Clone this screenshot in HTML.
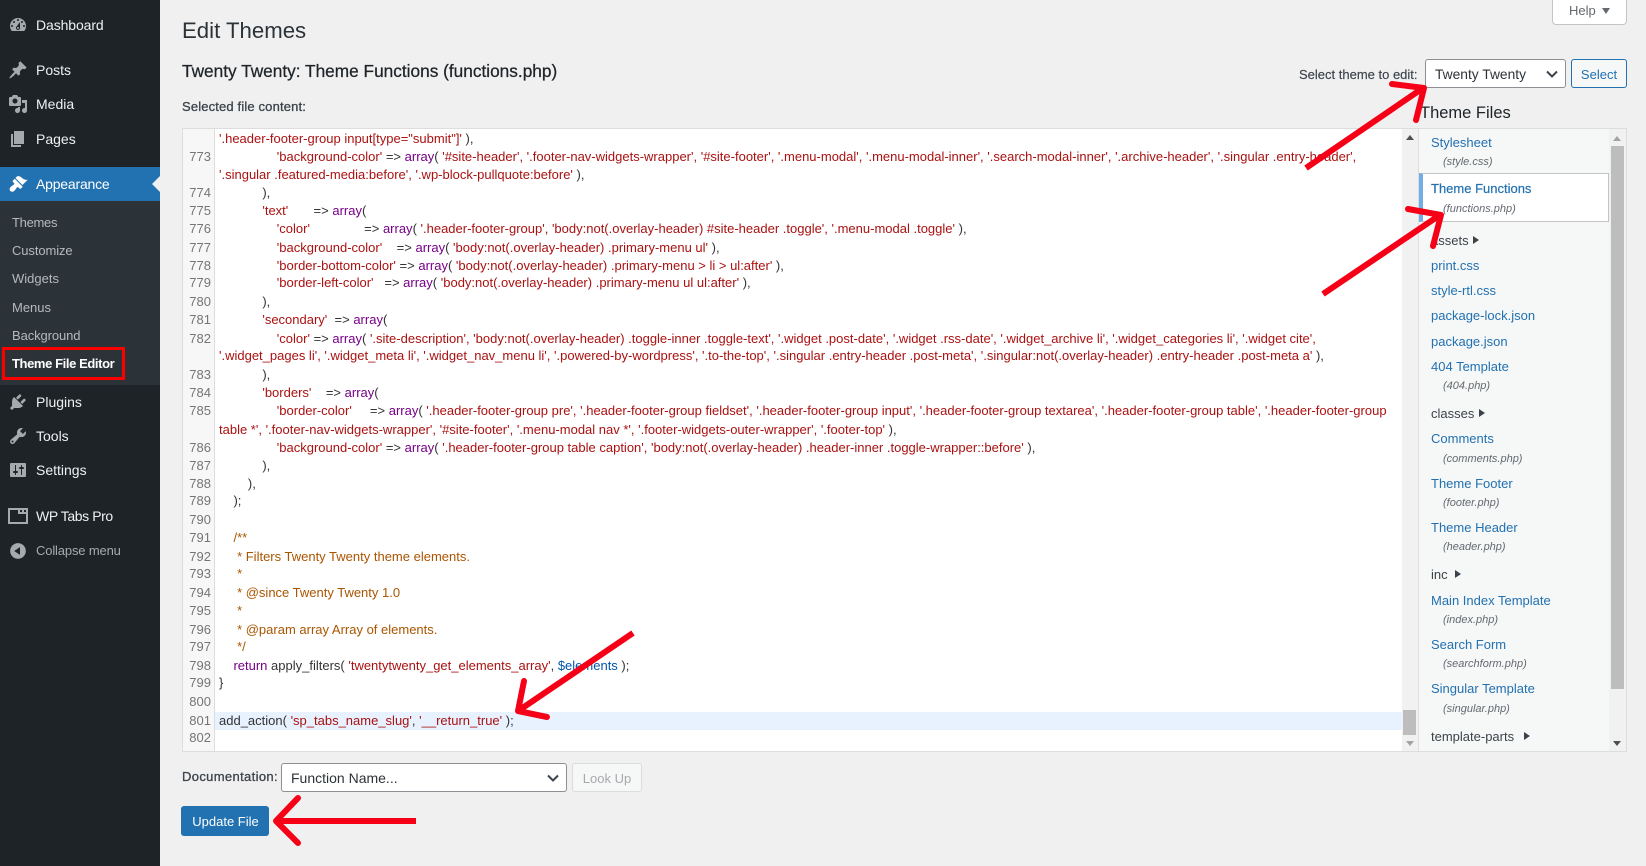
<!DOCTYPE html>
<html><head><meta charset="utf-8"><title>Edit Themes</title>
<style>
html,body{margin:0;padding:0;width:1646px;height:866px;overflow:hidden;background:#f0f0f1;font-family:"Liberation Sans",sans-serif;color:#3c434a}
div,span,svg{position:absolute}
b{font-weight:400}
#side{left:0;top:0;width:160px;height:866px;background:#1d2327}
.m{left:36px;font-size:14px;line-height:20px;color:#f0f0f1;white-space:nowrap}
.s{left:12px;font-size:13px;line-height:18px;color:#b4b9be;white-space:nowrap}
.ic{left:0;top:0}
#ed{left:182px;top:128px;width:1236px;height:624px;background:#fff;border:1px solid #ddd;box-sizing:border-box}
#gut{left:182px;top:128px;width:33px;height:624px;background:#f7f7f7;border:1px solid #ddd;box-sizing:border-box}
.r{left:183px;height:18px;font-size:13px;line-height:18px;color:#333;white-space:pre;tab-size:4}
.r i{position:absolute;left:0;width:28px;text-align:right;color:#757575;font-style:normal}
.r code{position:absolute;left:36px;font:inherit;white-space:pre;tab-size:4}
.st{color:#a11}.k{color:#708}.c{color:#a50}.v{color:#05a}
#fl{left:1418px;top:128px;width:209px;height:624px;background:#f6f7f7;border:1px solid #ddd;box-sizing:border-box}
.f{left:1431px;font-size:13px;line-height:18px;color:#2271b1;white-space:nowrap}
.n{left:1443px;font-size:11px;line-height:16px;font-style:italic;color:#646970;white-space:nowrap}
.d{left:1431px;font-size:13px;line-height:18px;color:#3c434a;white-space:nowrap}
.tri{width:0;height:0;border-left:6px solid #3c434a;border-top:4px solid transparent;border-bottom:4px solid transparent}
.sel{background:#fff;border:1px solid #8c8f94;border-radius:3px;box-sizing:border-box;font-size:13.8px;color:#2c3338;line-height:29px;padding-left:9px}
</style></head><body>

<div id="side"></div>
<div style="left:0;top:167px;width:160px;height:34px;background:#2271b1"></div>
<div style="left:0;top:201px;width:160px;height:184px;background:#2c3338"></div>
<div style="left:152px;top:176px;width:0;height:0;border-right:8px solid #f0f0f1;border-top:8px solid transparent;border-bottom:8px solid transparent"></div>

<svg class="ic" width="40" height="566" viewBox="0 0 40 566" fill="#a7aaad">
<path transform="translate(8 15)" d="M3.76 16h12.48c1.1-1.37 1.76-3.11 1.76-5 0-4.42-3.58-8-8-8s-8 3.58-8 8c0 1.89.66 3.63 1.76 5zM10 4c.55 0 1 .45 1 1s-.45 1-1 1-1-.45-1-1 .45-1 1-1zM6 6c.55 0 1 .45 1 1s-.45 1-1 1-1-.45-1-1 .45-1 1-1zm8 0c.55 0 1 .45 1 1s-.45 1-1 1-1-.45-1-1 .45-1 1-1zm-5.37 5.55L12 7v6c0 1.1-.9 2-2 2s-2-.9-2-2c0-.57.24-1.08.63-1.45zM4 10c.55 0 1 .45 1 1s-.45 1-1 1-1-.45-1-1 .45-1 1-1zm12 0c.55 0 1 .45 1 1s-.45 1-1 1-1-.45-1-1 .45-1 1-1zm-5 3c0-.55-.45-1-1-1s-1 .45-1 1 .45 1 1 1 1-.45 1-1z"/>
<path transform="translate(8 60)" d="M10.44 3.02l1.82-1.82 6.36 6.35-1.83 1.82c-1.05-.68-2.48-.57-3.41.36l-.75.75c-.92.93-1.04 2.35-.35 3.41l-1.83 1.82-2.41-2.41-2.8 2.79c-.42.42-3.38 2.71-3.8 2.29s1.86-3.39 2.28-3.81l2.79-2.79L4.1 9.36l1.83-1.82c1.05.69 2.48.57 3.4-.36l.75-.75c.93-.92 1.05-2.35.36-3.41z"/>
<path transform="translate(8 94)" d="M13 11V4c0-.55-.45-1-1-1h-1.67L9 1H5L3.67 3H2c-.55 0-1 .45-1 1v7c0 .55.45 1 1 1h10c.55 0 1-.45 1-1zM7 4.5c1.38 0 2.5 1.12 2.5 2.5S8.38 9.5 7 9.5 4.5 8.38 4.5 7 5.62 4.5 7 4.5zM14 6h5v10.5c0 1.38-1.12 2.5-2.5 2.5S14 17.88 14 16.5s1.12-2.5 2.5-2.5c.17 0 .34.02.5.05V9h-3V6zm-4 8.05V13h2v3.5c0 1.38-1.12 2.5-2.5 2.5S7 17.88 7 16.5 8.12 14 9.5 14c.17 0 .34.02.5.05z"/>
<path transform="translate(8 129)" d="M6 15V2h10v13H6zm-1 1h8v2H3V5h2v11z"/>
<path fill="#fff" transform="translate(8 174)" d="M14.48 11.06L7.41 3.99l1.5-1.5c.5-.56 2.3-.47 3.51.32 1.21.8 1.43 1.28 2.91 2.1 1.18.64 2.45 1.26 4.45.85zm-.71.71L6.7 4.7 4.93 6.47c-.39.39-.39 1.02 0 1.41l1.06 1.06c.39.39.39 1.03 0 1.42-.6.6-1.43 1.11-2.21 1.69-.35.26-.7.53-1.01.84-1.43 1.43-1.43 3.13-.4 4.16 1.03 1.03 2.73 1.03 4.16-.4.31-.31.58-.66.84-1.01.58-.78 1.09-1.61 1.69-2.21.39-.39 1.02-.39 1.41 0l1.06 1.06c.39.39 1.02.39 1.41 0l1.77-1.77z"/>
<path transform="translate(8 392)" d="M13.11 4.36L9.87 7.6 8 5.73l3.24-3.24c.35-.34 1.05-.2 1.56.32.52.51.66 1.21.31 1.55zm-8 1.77l.91-1.12 9.01 9.01-1.19.84c-.71.71-2.63 1.16-3.82 1.16H6.14L4.9 17.26c-.59.59-1.54.59-2.12 0-.59-.58-.59-1.53 0-2.12l1.24-1.24v-3.88c0-1.13.4-3.19 1.09-3.89zm7.26 3.97l3.24-3.24c.34-.35 1.04-.21 1.55.31.52.51.66 1.21.31 1.55l-3.24 3.25z"/>
<path transform="translate(8 426)" d="M16.68 9.77c-1.34 1.34-3.3 1.67-4.95.99l-5.41 6.52c-.99.99-2.59.99-3.58 0s-.99-2.59 0-3.57l6.52-5.42c-.68-1.65-.35-3.61.99-4.95 1.28-1.28 3.12-1.62 4.72-1.06l-2.89 2.89 2.82 2.82 2.86-2.87c.53 1.58.18 3.39-1.08 4.65zM3.81 16.21c.4.39 1.04.39 1.43 0 .4-.4.4-1.04 0-1.43-.39-.4-1.03-.4-1.43 0-.39.39-.39 1.03 0 1.43z"/>
<path transform="translate(8 460)" d="M18 16V4c0-.55-.45-1-1-1H3c-.55 0-1 .45-1 1v12c0 .55.45 1 1 1h14c.55 0 1-.45 1-1zM8 11h1c.55 0 1 .45 1 1s-.45 1-1 1H8v1.5c0 .28-.22.5-.5.5s-.5-.22-.5-.5V13H6c-.55 0-1-.45-1-1s.45-1 1-1h1V5.500c0-.28.22-.5.5-.5s.5.22.5.5V11zm5-2h-1c-.55 0-1-.45-1-1s.45-1 1-1h1V5.500c0-.28.22-.5.5-.5s.5.22.5.5V7h1c.55 0 1 .45 1 1s-.45 1-1 1h-1v5.500c0 .28-.22.5-.5.5s-.5-.22-.5-.5V9z"/>
<path fill-rule="evenodd" d="M8 508h20v16h-20zM10 514v8h16v-8h-8v-4h-8zM20 510v2h2v-2zM24 510v2h2v-2z"/>
<path transform="translate(8 541)" fill-rule="evenodd" d="M10 2.16c4.33 0 7.84 3.51 7.84 7.84s-3.51 7.84-7.84 7.84S2.16 14.33 2.16 10 5.67 2.16 10 2.16zM12 13.88V6.12L6.18 10z"/>
</svg>

<div class="m" style="top:15px;letter-spacing:-.1px">Dashboard</div>
<div class="m" style="top:60px">Posts</div>
<div class="m" style="top:94px">Media</div>
<div class="m" style="top:129px">Pages</div>
<div class="m" style="top:174px;color:#fff;letter-spacing:-.2px">Appearance</div>
<div class="s" style="top:214px;letter-spacing:-.3px">Themes</div>
<div class="s" style="top:242px;letter-spacing:-.1px">Customize</div>
<div class="s" style="top:270px">Widgets</div>
<div class="s" style="top:299px">Menus</div>
<div class="s" style="top:327px;letter-spacing:-.1px">Background</div>
<div class="s" style="top:355px;color:#fff;font-weight:bold;letter-spacing:-.4px">Theme File Editor</div>
<div style="left:2px;top:347px;width:123px;height:33px;border:3px solid #f00;box-sizing:border-box"></div>
<div class="m" style="top:392px">Plugins</div>
<div class="m" style="top:426px">Tools</div>
<div class="m" style="top:460px">Settings</div>
<div class="m" style="top:506px;letter-spacing:-.4px">WP Tabs Pro</div>
<div class="m" style="top:541px;font-size:13px;color:#a7aaad;letter-spacing:-.15px">Collapse menu</div>

<div style="left:1552px;top:-1px;width:75px;height:26px;background:#fff;border:1px solid #c3c4c7;border-radius:0 0 4px 4px;box-sizing:border-box"></div>
<div style="left:1569px;top:2px;font-size:13px;line-height:18px;color:#646970">Help</div>
<div style="left:1602px;top:8px;width:0;height:0;border-top:6px solid #646970;border-left:4px solid transparent;border-right:4px solid transparent"></div>

<div style="left:182px;top:16px;font-size:22.2px;line-height:30px;color:#2c3338;white-space:nowrap">Edit Themes</div>
<div style="left:182px;top:60px;font-size:17.25px;line-height:22px;color:#1d2327;white-space:nowrap;-webkit-text-stroke:.25px #1d2327">Twenty Twenty: Theme Functions (functions.php)</div>
<div style="left:182px;top:98px;font-size:13px;line-height:18px;color:#3c434a;white-space:nowrap;letter-spacing:.15px;-webkit-text-stroke:.3px #3c434a">Selected file content:</div>

<div style="left:1299px;top:66px;font-size:13px;line-height:18px;color:#3c434a;white-space:nowrap;-webkit-text-stroke:.15px #3c434a">Select theme to edit:</div>
<div class="sel" style="left:1425px;top:59px;width:141px;height:29px">Twenty Twenty</div>
<svg width="12" height="8" style="left:1546px;top:70px" viewBox="0 0 12 8"><path d="M1 1.500l5 5 5-5" fill="none" stroke="#3c434a" stroke-width="2"/></svg>
<div style="left:1571px;top:59px;width:56px;height:29px;background:#f6f7f7;border:1px solid #2271b1;border-radius:3px;box-sizing:border-box;color:#2271b1;font-size:13px;line-height:29px;text-align:center">Select</div>
<div style="left:1420px;top:102px;font-size:16.500px;line-height:22px;color:#1d2327;white-space:nowrap">Theme Files</div>

<div id="ed"></div>
<div id="gut"></div>
<div style="left:215px;top:712px;width:1187px;height:18px;background:#e8f2ff"></div>
<div style="left:1402px;top:129px;width:16px;height:622px;background:#f1f1f1"></div>
<div style="left:1403px;top:710px;width:13px;height:25px;background:#bdbdbd"></div>
<div style="left:1406px;top:135px;width:0;height:0;border-bottom:5px solid #505050;border-left:4px solid transparent;border-right:4px solid transparent"></div>
<div style="left:1406px;top:741px;width:0;height:0;border-top:5px solid #a3a3a3;border-left:4px solid transparent;border-right:4px solid transparent"></div>

<div class="r" style="top:130px"><code><b class="st">'.header-footer-group input[type="submit"]'</b> ),</code></div>
<div class="r" style="top:148px"><i>773</i><code>				<b class="st">'background-color'</b> =&gt; <b class="k">array</b>( <b class="st">'#site-header', '.footer-nav-widgets-wrapper', '#site-footer', '.menu-modal', '.menu-modal-inner', '.search-modal-inner', '.archive-header', '.singular .entry-header',</b></code></div>
<div class="r" style="top:166px"><code><b class="st">'.singular .featured-media:before', '.wp-block-pullquote:before'</b> ),</code></div>
<div class="r" style="top:184px"><i>774</i><code>			),</code></div>
<div class="r" style="top:202px"><i>775</i><code>			<b class="st">'text'</b>       =&gt; <b class="k">array</b>(</code></div>
<div class="r" style="top:220px"><i>776</i><code>				<b class="st">'color'</b>               =&gt; <b class="k">array</b>( <b class="st">'.header-footer-group', 'body:not(.overlay-header) #site-header .toggle', '.menu-modal .toggle'</b> ),</code></div>
<div class="r" style="top:239px"><i>777</i><code>				<b class="st">'background-color'</b>    =&gt; <b class="k">array</b>( <b class="st">'body:not(.overlay-header) .primary-menu ul'</b> ),</code></div>
<div class="r" style="top:257px"><i>778</i><code>				<b class="st">'border-bottom-color'</b> =&gt; <b class="k">array</b>( <b class="st">'body:not(.overlay-header) .primary-menu &gt; li &gt; ul:after'</b> ),</code></div>
<div class="r" style="top:274px"><i>779</i><code>				<b class="st">'border-left-color'</b>   =&gt; <b class="k">array</b>( <b class="st">'body:not(.overlay-header) .primary-menu ul ul:after'</b> ),</code></div>
<div class="r" style="top:293px"><i>780</i><code>			),</code></div>
<div class="r" style="top:311px"><i>781</i><code>			<b class="st">'secondary'</b>  =&gt; <b class="k">array</b>(</code></div>
<div class="r" style="top:330px"><i>782</i><code>				<b class="st">'color'</b> =&gt; <b class="k">array</b>( <b class="st">'.site-description', 'body:not(.overlay-header) .toggle-inner .toggle-text', '.widget .post-date', '.widget .rss-date', '.widget_archive li', '.widget_categories li', '.widget cite',</b></code></div>
<div class="r" style="top:347px"><code><b class="st">'.widget_pages li', '.widget_meta li', '.widget_nav_menu li', '.powered-by-wordpress', '.to-the-top', '.singular .entry-header .post-meta', '.singular:not(.overlay-header) .entry-header .post-meta a'</b> ),</code></div>
<div class="r" style="top:366px"><i>783</i><code>			),</code></div>
<div class="r" style="top:384px"><i>784</i><code>			<b class="st">'borders'</b>    =&gt; <b class="k">array</b>(</code></div>
<div class="r" style="top:402px"><i>785</i><code>				<b class="st">'border-color'</b>     =&gt; <b class="k">array</b>( <b class="st">'.header-footer-group pre', '.header-footer-group fieldset', '.header-footer-group input', '.header-footer-group textarea', '.header-footer-group table', '.header-footer-group</b></code></div>
<div class="r" style="top:421px"><code><b class="st">table *', '.footer-nav-widgets-wrapper', '#site-footer', '.menu-modal nav *', '.footer-widgets-outer-wrapper', '.footer-top'</b> ),</code></div>
<div class="r" style="top:439px"><i>786</i><code>				<b class="st">'background-color'</b> =&gt; <b class="k">array</b>( <b class="st">'.header-footer-group table caption', 'body:not(.overlay-header) .header-inner .toggle-wrapper::before'</b> ),</code></div>
<div class="r" style="top:457px"><i>787</i><code>			),</code></div>
<div class="r" style="top:475px"><i>788</i><code>		),</code></div>
<div class="r" style="top:492px"><i>789</i><code>	);</code></div>
<div class="r" style="top:511px"><i>790</i></div>
<div class="r" style="top:529px"><i>791</i><code class="c">	/**</code></div>
<div class="r" style="top:548px"><i>792</i><code class="c">	 * Filters Twenty Twenty theme elements.</code></div>
<div class="r" style="top:565px"><i>793</i><code class="c">	 *</code></div>
<div class="r" style="top:584px"><i>794</i><code class="c">	 * @since Twenty Twenty 1.0</code></div>
<div class="r" style="top:602px"><i>795</i><code class="c">	 *</code></div>
<div class="r" style="top:621px"><i>796</i><code class="c">	 * @param array Array of elements.</code></div>
<div class="r" style="top:638px"><i>797</i><code class="c">	 */</code></div>
<div class="r" style="top:657px"><i>798</i><code>	<b class="k">return</b> apply_filters( <b class="st">'twentytwenty_get_elements_array'</b>, <b class="v">$elements</b> );</code></div>
<div class="r" style="top:674px"><i>799</i><code>}</code></div>
<div class="r" style="top:693px"><i>800</i></div>
<div class="r" style="top:712px"><i>801</i><code>add_action( <b class="st">'sp_tabs_name_slug'</b>, <b class="st">'__return_true'</b> );</code></div>
<div class="r" style="top:729px"><i>802</i></div>

<div id="fl"></div>
<div style="left:1609px;top:129px;width:17px;height:622px;background:#f1f1f1"></div>
<div style="left:1611px;top:146px;width:13px;height:543px;background:#bdbdbd"></div>
<div style="left:1613px;top:136px;width:0;height:0;border-bottom:5px solid #a3a3a3;border-left:4px solid transparent;border-right:4px solid transparent"></div>
<div style="left:1613px;top:741px;width:0;height:0;border-top:5px solid #505050;border-left:4px solid transparent;border-right:4px solid transparent"></div>
<div style="left:1419px;top:173px;width:190px;height:49px;background:#fff;border:1px solid #c3c4c7;border-left:4px solid #72aee6;box-sizing:border-box"></div>

<div class="f" style="top:134px">Stylesheet</div><div class="n" style="top:154px">(style.css)</div>
<div class="f" style="top:180px;-webkit-text-stroke:.2px #2271b1">Theme Functions</div><div class="n" style="top:201px">(functions.php)</div>
<div class="d" style="top:232px">assets</div><div class="tri" style="left:1473px;top:236px"></div>
<div class="f" style="top:257px">print.css</div>
<div class="f" style="top:282px">style-rtl.css</div>
<div class="f" style="top:307px">package-lock.json</div>
<div class="f" style="top:333px">package.json</div>
<div class="f" style="top:358px">404 Template</div><div class="n" style="top:378px">(404.php)</div>
<div class="d" style="top:405px">classes</div><div class="tri" style="left:1479px;top:409px"></div>
<div class="f" style="top:430px">Comments</div><div class="n" style="top:451px">(comments.php)</div>
<div class="f" style="top:475px">Theme Footer</div><div class="n" style="top:495px">(footer.php)</div>
<div class="f" style="top:519px">Theme Header</div><div class="n" style="top:539px">(header.php)</div>
<div class="d" style="top:566px">inc</div><div class="tri" style="left:1455px;top:570px"></div>
<div class="f" style="top:592px">Main Index Template</div><div class="n" style="top:612px">(index.php)</div>
<div class="f" style="top:636px">Search Form</div><div class="n" style="top:656px">(searchform.php)</div>
<div class="f" style="top:680px">Singular Template</div><div class="n" style="top:701px">(singular.php)</div>
<div class="d" style="top:728px">template-parts</div><div class="tri" style="left:1524px;top:732px"></div>

<div style="left:182px;top:768px;font-size:13px;line-height:18px;color:#3c434a;white-space:nowrap;letter-spacing:.35px;-webkit-text-stroke:.3px #3c434a">Documentation:</div>
<div class="sel" style="left:281px;top:763px;width:286px;height:29px;font-size:14px">Function Name...</div>
<svg width="12" height="8" style="left:547px;top:774px" viewBox="0 0 12 8"><path d="M1 1.500l5 5 5-5" fill="none" stroke="#3c434a" stroke-width="2"/></svg>
<div style="left:572px;top:763px;width:70px;height:29px;background:#f6f7f7;border:1px solid #dcdcde;border-radius:3px;box-sizing:border-box;color:#a7aaad;font-size:13px;line-height:29px;text-align:center">Look Up</div>
<div style="left:181px;top:806px;width:88px;height:30px;background:#2271b1;border-radius:3px;color:#fff;font-size:13px;line-height:32px;text-align:center;padding-left:1px;box-sizing:border-box">Update File</div>

<svg width="1646" height="866" style="left:0;top:0" viewBox="0 0 1646 866">
<g fill="none" stroke="#f50016" stroke-width="6" stroke-linecap="round" stroke-linejoin="round">
<path stroke-linecap="butt" d="M1306 168L1423 88"/><path d="M1392 84L1424 88L1416 120"/>
<path stroke-linecap="butt" d="M1323 294L1440 215"/><path d="M1408 209L1441 215L1433 246"/>
<path stroke-linecap="butt" d="M633 633L518 711"/><path d="M524 681L518 711L547 717"/>
<path stroke-linecap="butt" d="M416 821L276 821"/><path d="M298 798L276 821L298 843"/>
</g></svg>
</body></html>
